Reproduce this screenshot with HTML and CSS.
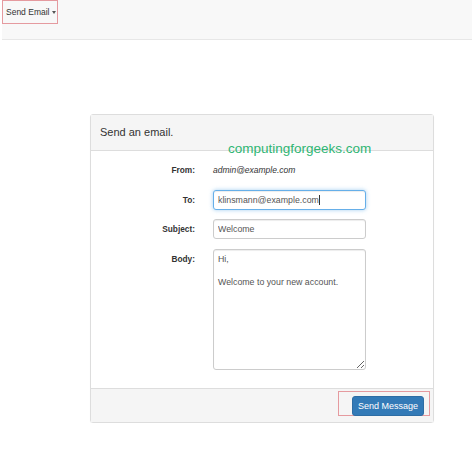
FILE: index.html
```html
<!DOCTYPE html>
<html>
<head>
    <title>Send Email</title>
    <link rel="stylesheet" href="styles.css">
</head>
<body>
    <nav class="navbar">
        <a class="nav-link" href="#">Send Email <span class="caret"></span></a>
    </nav>

    <div class="panel">
        <div class="panel-heading">Send an email.</div>
        <div class="watermark">computingforgeeks.com</div>
        <form class="panel-body" id="emailForm">
            <label class="form-label">From:</label>
            <div class="form-static">admin@example.com</div>

            <label class="form-label" for="to">To:</label>
            <div class="form-field"><input type="text" id="to" class="form-control focused" value="klinsmann@example.com"><span class="cursor"></span></div>

            <label class="form-label" for="subject">Subject:</label>
            <input type="text" id="subject" class="form-control" value="Welcome">

            <label class="form-label" for="body">Body:</label>
            <textarea id="body" class="form-control body-text">Hi,

Welcome to your new account.</textarea>
        </form>
        <div class="panel-footer">
            <span class="highlight"><button type="submit" form="emailForm" class="btn">Send Message</button></span>
        </div>
    </div>
</body>
</html>
```

FILE: styles.css
```css
body {
    margin: 0;
    font-family: "Liberation Sans", Arial, sans-serif;
    font-size: 8.5px;
    color: #333;
    background: #fff;
}
.navbar {
    margin: 0 2px;
    height: 40px;
    background: #f8f8f8;
    border-bottom: 1px solid #e7e7e7;
    box-sizing: border-box;
}
.nav-link {
    display: inline-block;
    height: 24px;
    box-sizing: border-box;
    padding: 6px 1px 0 3px;
    border: 1px solid #e59a9f;
    color: #333;
    text-decoration: none;
    font-size: 8.5px;
}
.caret {
    display: inline-block;
    width: 0;
    height: 0;
    vertical-align: middle;
    border-top: 3px solid #555;
    border-left: 2px solid transparent;
    border-right: 2px solid transparent;
}
.panel {
    position: relative;
    width: 344px;
    margin: 74px 0 0 90px;
    border: 1px solid #ddd;
    border-radius: 3px;
    box-sizing: border-box;
    box-shadow: 0 1px 1px rgba(0,0,0,0.05);
}
.panel-heading {
    height: 36px;
    box-sizing: border-box;
    padding: 11px 9px 0;
    font-size: 11px;
    background: #f5f5f5;
    border-bottom: 1px solid #ddd;
}
.watermark {
    position: absolute;
    top: 26px;
    left: 137px;
    font-size: 13.5px;
    color: #2fb573;
    pointer-events: none;
}
.panel-body {
    display: grid;
    grid-template-columns: 104px 153px;
    column-gap: 18px;
    row-gap: 9.5px;
    padding: 9px 0 18px;
    margin: 0;
}
.form-label {
    font-size: 8.3px;
    font-weight: bold;
    text-align: right;
    line-height: 20px;
}
.form-static {
    font-style: italic;
    line-height: 20px;
}
.form-field {
    position: relative;
}
.form-control {
    display: block;
    width: 153px;
    height: 20px;
    box-sizing: border-box;
    margin: 0;
    padding: 0 4px;
    border: 1px solid #ccc;
    border-radius: 3px;
    font-family: "Liberation Sans", Arial, sans-serif;
    font-size: 8.8px;
    color: #555;
    background: #fff;
    box-shadow: inset 0 1px 1px rgba(0,0,0,0.075);
}
.focused {
    border-color: #66afe9;
    outline: none;
    box-shadow: inset 0 1px 1px rgba(0,0,0,0.075), 0 0 4px rgba(102,175,233,0.6);
}
.cursor {
    position: absolute;
    left: 106px;
    top: 5px;
    width: 1px;
    height: 10px;
    background: #333;
}
.body-text {
    height: 121px;
    padding: 4px;
    line-height: 11.5px;
    resize: vertical;
}
.panel-footer {
    display: flex;
    justify-content: flex-end;
    height: 34px;
    box-sizing: border-box;
    padding: 2px 3px 0 0;
    background: #f5f5f5;
    border-top: 1px solid #ddd;
}
.highlight {
    display: block;
    height: 25px;
    box-sizing: border-box;
    padding: 4px 5px 0 13px;
    border: 1px solid #e59a9f;
}
.btn {
    display: block;
    width: 72px;
    height: 20px;
    padding: 0;
    background: #337ab7;
    border: 1px solid #2e6da4;
    border-radius: 3px;
    color: #fff;
    font-family: "Liberation Sans", Arial, sans-serif;
    font-size: 9px;
    cursor: pointer;
}
```
